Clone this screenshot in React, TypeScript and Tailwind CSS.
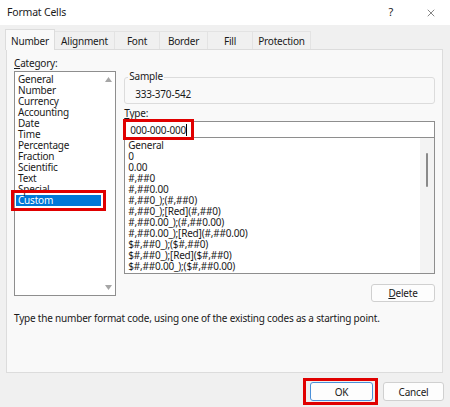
import { X } from 'lucide-react';

const categories = [
  'General',
  'Number',
  'Currency',
  'Accounting',
  'Date',
  'Time',
  'Percentage',
  'Fraction',
  'Scientific',
  'Text',
  'Special',
  'Custom',
];

const formats = [
  'General',
  '0',
  '0.00',
  '#,##0',
  '#,##0.00',
  '#,##0_);(#,##0)',
  '#,##0_);[Red](#,##0)',
  '#,##0.00_);(#,##0.00)',
  '#,##0.00_);[Red](#,##0.00)',
  '$#,##0_);($#,##0)',
  '$#,##0_);[Red]($#,##0)',
  '$#,##0.00_);($#,##0.00)',
];

const tabs = [
  { label: 'Number', w: 'w-[50px]' },
  { label: 'Alignment', w: 'w-[60px]' },
  { label: 'Font', w: 'w-[45px]' },
  { label: 'Border', w: 'w-[48px]' },
  { label: 'Fill', w: 'w-[45px]' },
  { label: 'Protection', w: 'w-[58px]' },
];

export default function App() {
  return (
    <div
      className="w-[450px] h-[407px] bg-[#f0f0f0] flex flex-col text-[#1a1a1a] overflow-hidden tracking-[-0.2px]"
      style={{ fontFamily: '"Noto Sans", "Open Sans", sans-serif' }}
    >
      {/* Title bar */}
      <div className="h-[25px] bg-white flex items-center shrink-0">
        <span className="ml-[7px] text-[10.5px]">Format Cells</span>
        <span className="ml-auto text-[11px] mr-[32px]">?</span>
        <X className="w-[12px] h-[12px] mr-[13px] text-[#333]" strokeWidth={1.2} />
      </div>

      {/* Tabs */}
      <div className="flex items-end h-[24px] pl-[5px] shrink-0">
        {tabs.map((tab, i) => (
          <div
            key={tab.label}
            className={
              i === 0
                ? `${tab.w} h-[21px] pt-[2px] flex items-center justify-center text-[10px] bg-[#f9f9f9] border border-b-0 border-[#dcdcdc] -mb-px relative z-10`
                : `${tab.w} h-[18px] pt-[2px] flex items-center justify-center text-[10px] bg-[#f0f0f0] border-r border-t border-[#e3e3e3]`
            }
          >
            {tab.label}
          </div>
        ))}
      </div>

      {/* Panel */}
      <div className="mx-[6px] w-[437px] h-[324px] bg-[#f9f9f9] border border-[#dcdcdc] shrink-0 px-[7px] pt-[6px] flex flex-col">
        <div className="flex gap-[8px]">
          {/* Category column */}
          <div className="flex flex-col w-[103px]">
            <span className="text-[10px] leading-[14px]">
              <span className="underline">C</span>ategory:
            </span>
            <div className="mt-[1px] h-[225px] bg-white border border-[#8e8e8e] flex">
              <div className="flex-1 pt-[2px] pl-[1px]">
                {categories.map((c) => (
                  <div
                    key={c}
                    className={
                      c === 'Custom'
                        ? 'h-[11px] leading-[11px] text-[10px] pl-[2px] bg-[#0078d7] text-white outline-[3px] outline-solid outline-[#e00000] outline-offset-[2px]'
                        : 'h-[11px] leading-[11px] text-[10px] pl-[2px]'
                    }
                  >
                    {c}
                  </div>
                ))}
              </div>
              <div className="w-[14px] flex flex-col items-center justify-between py-[5px] text-[#a6a6a6]">
                <svg width="7" height="5" viewBox="0 0 7 5">
                  <path d="M0 5 L3.5 0 L7 5 Z" fill="currentColor" />
                </svg>
                <svg width="7" height="5" viewBox="0 0 7 5">
                  <path d="M0 0 L3.5 5 L7 0 Z" fill="currentColor" />
                </svg>
              </div>
            </div>
          </div>

          {/* Right column */}
          <div className="flex flex-col w-[313px]">
            <div className="mt-[21px] h-[27px] border border-[#dcdcdc] rounded-[3px] relative">
              <span className="absolute -top-[9px] left-[3px] px-[1px] bg-[#f9f9f9] text-[10px] leading-[14px]">
                Sample
              </span>
              <div className="pl-[10px] pt-[9px] text-[10px] leading-[14px]">333-370-542</div>
            </div>
            <span className="mt-[2px] text-[10px] leading-[14px]">
              <span className="underline">T</span>ype:
            </span>
            <div className="mt-[1px] h-[17px] bg-white border border-[#8e8e8e] flex items-center relative">
              <span className="pl-[5px] text-[10px] leading-[14px]">000-000-000</span>
              <span className="w-px h-[12px] bg-black" />
              <span className="absolute -left-[2px] -top-[3px] w-[71px] h-[21px] border-[3px] border-[#e00000]" />
            </div>
            <div className="h-[136px] bg-white border border-[#8e8e8e] border-t-0 flex">
              <div className="flex-1 pl-[3px] pt-[2px] overflow-hidden">
                {formats.map((f) => (
                  <div key={f} className="h-[11px] leading-[11px] text-[10px] whitespace-nowrap">
                    {f}
                  </div>
                ))}
              </div>
              <div className="w-[14px] bg-[#f3f3f3] flex justify-center pt-[15px]">
                <div className="w-[2px] h-[34px] bg-[#8a8a8a] rounded-full" />
              </div>
            </div>
            <div className="flex justify-end mt-[10px]">
              <button className="w-[64px] h-[18px] bg-[#fdfdfd] border border-[#d0d0d0] rounded-[3px] text-[10px] leading-[14px]">
                <span className="underline">D</span>elete
              </button>
            </div>
          </div>
        </div>
        <p className="mt-[9px] text-[10px] leading-[14px]">
          Type the number format code, using one of the existing codes as a starting point.
        </p>
      </div>

      {/* Buttons */}
      <div className="flex justify-end items-center gap-[5px] pr-[6px] mt-[5px]">
        <div className="border-[3px] border-[#e00000] pl-[4px] pr-[2px] py-[1px]">
          <button className="block w-[63px] h-[19px] bg-[#fdfdfd] border border-[#4a90d9] rounded-[3px] text-[10px] leading-[14px]">
            OK
          </button>
        </div>
        <button className="w-[61px] h-[19px] bg-[#fdfdfd] border border-[#d0d0d0] rounded-[3px] text-[10px] leading-[14px]">
          Cancel
        </button>
      </div>
    </div>
  );
}
